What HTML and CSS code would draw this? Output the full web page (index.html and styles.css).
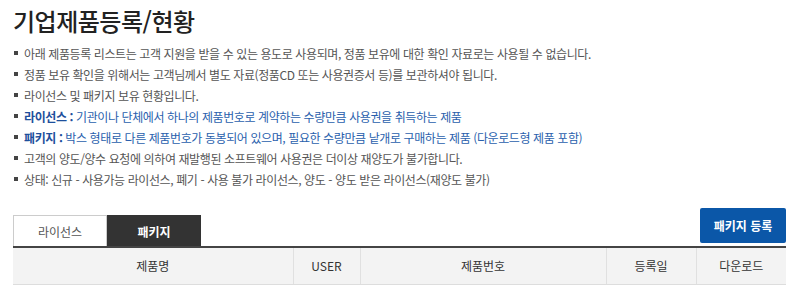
FILE: index.html
```html
<!DOCTYPE html>
<html lang="ko">
<head>
<meta charset="utf-8">
<link rel="stylesheet" href="styles.css">
</head>
<body>
<div class="page">
  <h1 class="title">기업제품등록/현황</h1>
  <ul class="notes">
    <li>아래 제품등록 리스트는 고객 지원을 받을 수 있는 용도로 사용되며, 정품 보유에 대한 확인 자료로는 사용될 수 없습니다.</li>
    <li>정품 보유 확인을 위해서는 고객님께서 별도 자료(정품CD 또는 사용권증서 등)를 보관하셔야 됩니다.</li>
    <li>라이선스 및 패키지 보유 현황입니다.</li>
    <li class="blue"><b>라이선스 :</b> 기관이나 단체에서 하나의 제품번호로 계약하는 수량만큼 사용권을 취득하는 제품</li>
    <li class="blue"><b>패키지 :</b> 박스 형태로 다른 제품번호가 동봉되어 있으며, 필요한 수량만큼 낱개로 구매하는 제품 (다운로드형 제품 포함)</li>
    <li>고객의 양도/양수 요청에 의하여 재발행된 소프트웨어 사용권은 더이상 재양도가 불가합니다.</li>
    <li>상태: 신규 - 사용가능 라이선스, 폐기 - 사용 불가 라이선스, 양도 - 양도 받은 라이선스(재양도 불가)</li>
  </ul>
  <div class="toolbar">
    <div class="tabs">
      <span class="tab">라이선스</span>
      <span class="tab active">패키지</span>
    </div>
    <button class="btn">패키지 등록</button>
  </div>
  <table class="grid">
    <colgroup>
      <col class="c1"><col class="c2"><col class="c3"><col class="c4"><col class="c5">
    </colgroup>
    <thead>
      <tr><th>제품명</th><th>USER</th><th>제품번호</th><th>등록일</th><th>다운로드</th></tr>
    </thead>
  </table>
</div>
</body>
</html>
```
FILE: styles.css
```css
* { box-sizing: border-box; }
html, body { margin: 0; padding: 0; background: #fff; }
body {
  font-family: "Noto Sans CJK KR", "Noto Sans", "Liberation Sans", sans-serif;
  color: #555;
  font-size: 12px;
}
.page {
  width: 773px;
  margin-left: 13px;
}
.title {
  margin: 0;
  padding-top: 5px;
  font-size: 24px;
  line-height: 32px;
  font-weight: 500;
  color: #222;
  letter-spacing: -0.5px;
}
.notes {
  list-style: none;
  margin: 6px 0 0;
  padding: 0;
}
.notes li {
  position: relative;
  padding-left: 11px;
  line-height: 21px;
  letter-spacing: -0.4px;
  color: #555;
}
.notes li::before {
  content: "";
  position: absolute;
  left: 1px;
  top: 8px;
  width: 4px;
  height: 4px;
  background: #444;
}
.notes li.blue { color: #2a5fad; }
.notes li.blue b { font-weight: 700; color: #1e4f9c; }
.toolbar {
  display: flex;
  justify-content: space-between;
  align-items: flex-end;
  margin-top: 18px;
  height: 38px;
}
.tabs { display: flex; align-self: flex-end; }
.tab {
  width: 94px;
  height: 31px;
  display: flex;
  align-items: center;
  justify-content: center;
  font-size: 12px;
  color: #555;
  background: #fff;
  border: 1px solid #ccc;
  border-bottom: 0;
}
.tab.active {
  background: #333;
  border-color: #333;
  color: #fff;
  font-weight: 700;
}
.btn {
  width: 86px;
  height: 35px;
  margin-bottom: 3px;
  border: 0;
  border-radius: 2px;
  background: #0b57a8;
  color: #fff;
  font-family: inherit;
  font-size: 12px;
  font-weight: 700;
  padding: 0;
}
.grid {
  width: 773px;
  border-collapse: collapse;
  table-layout: fixed;
  border-top: 2px solid #444;
}
.c1 { width: 280px; }
.c2 { width: 67px; }
.c3 { width: 246px; }
.c4 { width: 90px; }
.c5 { width: 90px; }
.grid th {
  height: 37px;
  background: #f3f3f3;
  border-bottom: 1px solid #ddd;
  border-left: 1px solid #e0e0e0;
  font-weight: 400;
  font-size: 12px;
  color: #333;
  padding: 0;
}
.grid th:first-child { border-left: 0; }
```
